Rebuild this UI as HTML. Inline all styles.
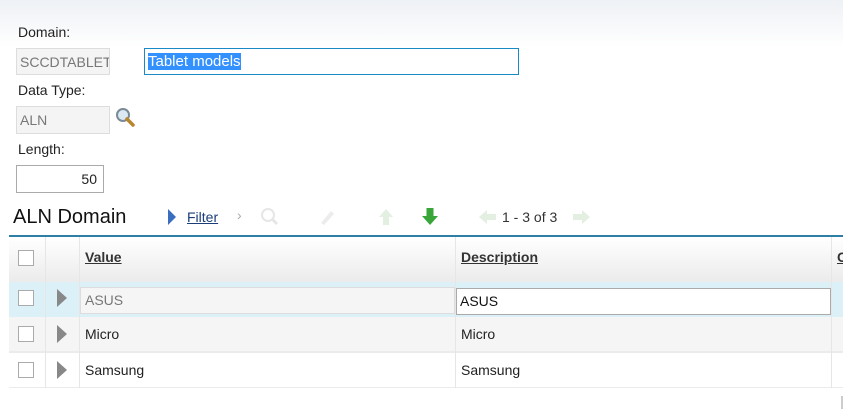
<!DOCTYPE html>
<html><head><meta charset="utf-8"><style>
*{box-sizing:border-box;margin:0;padding:0}
body{width:843px;height:409px;overflow:hidden;background:#fff;font-family:"Liberation Sans",Arial,sans-serif;font-size:13px;color:#222;position:relative}
.abs{position:absolute}
.top{left:0;top:0;width:843px;height:48px;background:linear-gradient(#eef1f5,#fff)}
.lbl{font-size:14px;color:#222}
.ro{background:#f4f4f4;border:1px solid #ddd;color:#777;font-size:14px;padding-left:3px;line-height:26px}
.cb{width:16px;height:16px;border:1px solid #aaa;background:#fff}
.vl{background:#e6e6e6;width:1px}
.hl{background:#e6e6e6;height:1px}
.tri{width:0;height:0;border-top:9px solid transparent;border-bottom:9px solid transparent;border-left:10px solid #888}
</style></head><body>
<div class="abs top"></div>
<div class="abs lbl" style="left:18px;top:24px">Domain:</div>
<div class="abs ro" style="left:16px;top:48px;width:94px;height:27px;overflow:hidden;white-space:nowrap">SCCDTABLET</div>
<div class="abs" style="left:144px;top:48px;width:375px;height:27px;border:1px solid #1a8ac6;background:#fff"><span style="position:absolute;left:3px;top:4px;background:#3390ff;color:#fff;font-size:15px;line-height:17px">Tablet models</span></div>
<div class="abs lbl" style="left:18px;top:82px">Data Type:</div>
<div class="abs ro" style="left:16px;top:106px;width:94px;height:28px">ALN</div>
<svg class="abs" style="left:115px;top:107px" width="22" height="20" viewBox="0 0 22 20"><circle cx="8" cy="8" r="6" fill="#dbe9f3" stroke="#7a8a96" stroke-width="2"/><path d="M12 12l6 6" stroke="#b8862e" stroke-width="3.5" stroke-linecap="round"/></svg>
<div class="abs lbl" style="left:18px;top:141px">Length:</div>
<div class="abs" style="left:16px;top:165px;width:88px;height:28px;border:1px solid #aaa;background:#fff;text-align:right;padding-right:6px;line-height:26px;font-size:14px">50</div>
<div class="abs" style="left:13px;top:206px;font-size:20px;color:#111">ALN Domain</div>
<svg class="abs" style="left:167px;top:208px" width="10" height="18"><path d="M1 1L9 9L1 17Z" fill="#3a6fbf"/></svg>
<div class="abs" style="left:187px;top:209px;font-size:14px;color:#1b3d7a;text-decoration:underline">Filter</div>
<div class="abs" style="left:237px;top:207px;color:#aaa;font-size:14px">›</div>
<svg class="abs" style="left:259px;top:207px" width="22" height="20"><circle cx="9" cy="8" r="6" fill="none" stroke="#e6e6e6" stroke-width="2"/><path d="M13 12l5 5" stroke="#e6e6e6" stroke-width="3"/></svg>
<svg class="abs" style="left:315px;top:207px" width="22" height="20"><path d="M6 16L16 4l3 3L9 18Z" fill="#ececec"/></svg>
<svg class="abs" style="left:375px;top:207px" width="22" height="20"><path d="M11 2L18 10H14V18H8V10H4Z" fill="#e3efe0"/></svg>
<svg class="abs" style="left:419px;top:207px" width="22" height="20"><path d="M11 18L19 9H14.5V1H7.5V9H3Z" fill="#3aa63a"/></svg>
<svg class="abs" style="left:478px;top:208px" width="20" height="18"><path d="M1 9L9 2V6H18V12H9V16Z" fill="#e3efe0"/></svg>
<div class="abs" style="left:502px;top:209px;font-size:14px;color:#333">1 - 3 of 3</div>
<svg class="abs" style="left:571px;top:208px" width="20" height="18"><path d="M19 9L11 2V6H2V12H11V16Z" fill="#e3efe0"/></svg>
<div class="abs" style="left:9px;top:235px;width:834px;height:2px;background:#2e7fa6"></div>
<div class="abs" style="left:9px;top:237px;width:834px;height:45px;background:linear-gradient(#fff,#ebebeb)"></div>
<div class="abs" style="left:9px;top:282px;width:834px;height:35px;background:#dcf0f8"></div>
<div class="abs" style="left:9px;top:317px;width:834px;height:35px;background:#f5f5f5"></div>
<div class="abs hl" style="left:9px;top:351px;width:834px;height:2px;background:#ebebeb"></div>
<div class="abs" style="left:9px;top:353px;width:834px;height:34px;background:#fff"></div>
<div class="abs hl" style="left:9px;top:387px;width:834px;background:#ebebeb"></div>
<div class="abs vl" style="left:45px;top:237px;height:151px"></div>
<div class="abs vl" style="left:79px;top:237px;height:151px"></div>
<div class="abs vl" style="left:455px;top:237px;height:151px"></div>
<div class="abs vl" style="left:831px;top:237px;height:151px"></div>
<div class="abs cb" style="left:18px;top:250px"></div>
<div class="abs" style="left:85px;top:249px;font-weight:bold;font-size:14px;color:#333;text-decoration:underline">Value</div>
<div class="abs" style="left:461px;top:249px;font-weight:bold;font-size:14px;color:#333;text-decoration:underline">Description</div>
<div class="abs" style="left:837px;top:249px;font-weight:bold;font-size:14px;color:#333;text-decoration:underline">C</div>
<div class="abs cb" style="left:18px;top:290px"></div>
<div class="abs tri" style="left:57px;top:289px"></div>
<div class="abs" style="left:80px;top:287px;width:375px;height:27px;background:#f5f5f5;border:1px solid #ddd;padding-left:4px;line-height:25px;color:#777;font-size:14px">ASUS</div>
<div class="abs" style="left:456px;top:288px;width:375px;height:27px;background:#fff;border:1px solid #aaa;padding-left:3px;line-height:25px;color:#111;font-size:14px">ASUS</div>
<div class="abs cb" style="left:18px;top:326px"></div>
<div class="abs tri" style="left:57px;top:325px"></div>
<div class="abs" style="left:85px;top:326px;font-size:14px">Micro</div>
<div class="abs" style="left:461px;top:326px;font-size:14px">Micro</div>
<div class="abs cb" style="left:18px;top:362px"></div>
<div class="abs tri" style="left:57px;top:361px"></div>
<div class="abs" style="left:85px;top:362px;font-size:14px">Samsung</div>
<div class="abs" style="left:461px;top:362px;font-size:14px">Samsung</div>
<div class="abs" style="left:841px;top:396px;width:2px;height:13px;background:#ccc"></div>
</body></html>
